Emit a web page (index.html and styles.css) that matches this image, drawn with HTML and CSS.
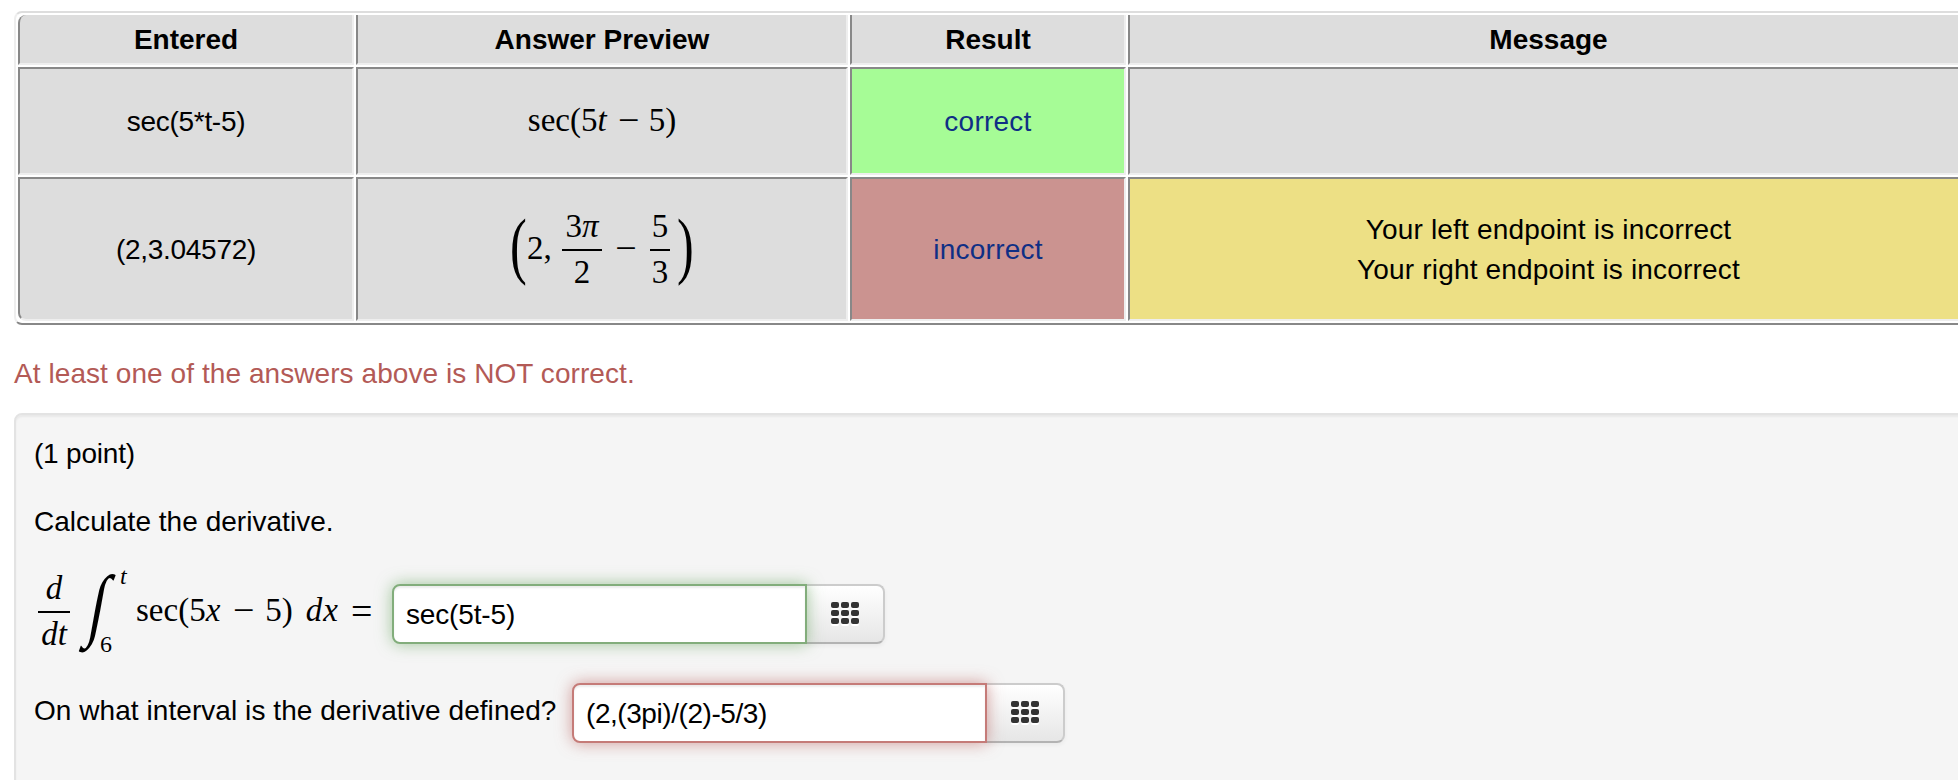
FILE: index.html
```html
<!DOCTYPE html>
<html lang="en">
<head>
    <meta charset="UTF-8">
    <meta name="viewport" content="width=device-width, initial-scale=1.0">
    <title>Calculate the derivative</title>
    <link rel="stylesheet" href="styles.css">
</head>
<body>
    <table class="attempts">
        <colgroup>
            <col class="col-entered">
            <col class="col-preview">
            <col class="col-result">
            <col class="col-message">
        </colgroup>
        <thead>
            <tr>
                <th>Entered</th>
                <th>Answer Preview</th>
                <th>Result</th>
                <th>Message</th>
            </tr>
        </thead>
        <tbody>
            <tr class="row-first">
                <td class="entered">sec(5*t-5)</td>
                <td>
                    <span class="math"><span class="run">sec(5<i>t</i></span><span class="op">−</span><span class="run">5)</span></span>
                </td>
                <td class="correct"><a>correct</a></td>
                <td></td>
            </tr>
            <tr class="row-second">
                <td class="entered">(2,3.04572)</td>
                <td>
                    <span class="math">
                        <span class="paren"><span>(</span></span>
                        <span class="run two">2,</span>
                        <span class="frac wide"><span>3<i>π</i></span><span>2</span></span>
                        <span class="op op-wide">−</span>
                        <span class="frac narrow"><span>5</span><span>3</span></span>
                        <span class="paren"><span>)</span></span>
                    </span>
                </td>
                <td class="incorrect"><a>incorrect</a></td>
                <td class="message">Your left endpoint is incorrect<br>Your right endpoint is incorrect</td>
            </tr>
        </tbody>
    </table>

    <p class="score-message">At least one of the answers above is NOT correct.</p>

    <div class="problem">
        <p class="points">(1 point)</p>
        <p class="prompt">Calculate the derivative.</p>
        <div class="question first">
            <span class="math formula">
                <span class="frac ddt"><span><i>d</i></span><span><i>dt</i></span></span>
                <span class="integral"><span>∫</span></span>
                <span class="limits"><i>t</i><span>6</span></span>
                <span class="run">sec(5<i>x</i></span><span class="op">−</span><span class="run">5)</span>
                <i class="run dx">dx</i>
                <span class="eq">=</span>
            </span>
            <div class="answer">
                <input class="is-correct" type="text" value="sec(5t-5)">
                <button type="button">
                    <svg width="28" height="24" viewBox="0 0 28 24">
                        <g class="icon-shadow">
                            <rect x="0" y="2" width="8" height="6" rx="2"/><rect x="10" y="2" width="8" height="6" rx="2"/><rect x="20" y="2" width="8" height="6" rx="2"/>
                            <rect x="0" y="10" width="8" height="6" rx="2"/><rect x="10" y="10" width="8" height="6" rx="2"/><rect x="20" y="10" width="8" height="6" rx="2"/>
                            <rect x="0" y="18" width="8" height="6" rx="2"/><rect x="10" y="18" width="8" height="6" rx="2"/><rect x="20" y="18" width="8" height="6" rx="2"/>
                        </g>
                        <g class="icon-keys">
                            <rect x="0" y="0" width="8" height="6" rx="2"/><rect x="10" y="0" width="8" height="6" rx="2"/><rect x="20" y="0" width="8" height="6" rx="2"/>
                            <rect x="0" y="8" width="8" height="6" rx="2"/><rect x="10" y="8" width="8" height="6" rx="2"/><rect x="20" y="8" width="8" height="6" rx="2"/>
                            <rect x="0" y="16" width="8" height="6" rx="2"/><rect x="10" y="16" width="8" height="6" rx="2"/><rect x="20" y="16" width="8" height="6" rx="2"/>
                        </g>
                    </svg>
                </button>
            </div>
        </div>
        <div class="question second">
            <span class="label">On what interval is the derivative defined?</span>
            <div class="answer">
                <input class="is-incorrect" type="text" value="(2,(3pi)/(2)-5/3)">
                <button type="button">
                    <svg width="28" height="24" viewBox="0 0 28 24">
                        <g class="icon-shadow">
                            <rect x="0" y="2" width="8" height="6" rx="2"/><rect x="10" y="2" width="8" height="6" rx="2"/><rect x="20" y="2" width="8" height="6" rx="2"/>
                            <rect x="0" y="10" width="8" height="6" rx="2"/><rect x="10" y="10" width="8" height="6" rx="2"/><rect x="20" y="10" width="8" height="6" rx="2"/>
                            <rect x="0" y="18" width="8" height="6" rx="2"/><rect x="10" y="18" width="8" height="6" rx="2"/><rect x="20" y="18" width="8" height="6" rx="2"/>
                        </g>
                        <g class="icon-keys">
                            <rect x="0" y="0" width="8" height="6" rx="2"/><rect x="10" y="0" width="8" height="6" rx="2"/><rect x="20" y="0" width="8" height="6" rx="2"/>
                            <rect x="0" y="8" width="8" height="6" rx="2"/><rect x="10" y="8" width="8" height="6" rx="2"/><rect x="20" y="8" width="8" height="6" rx="2"/>
                            <rect x="0" y="16" width="8" height="6" rx="2"/><rect x="10" y="16" width="8" height="6" rx="2"/><rect x="20" y="16" width="8" height="6" rx="2"/>
                        </g>
                    </svg>
                </button>
            </div>
        </div>
    </div>
</body>
</html>
```
FILE: styles.css
```css
* {
    box-sizing: border-box;
}

body {
    margin: 0;
    padding: 11px 0 0 14px;
    height: 780px;
    overflow: hidden;
    background: #fff;
    color: #000;
    font-family: "Liberation Sans", Arial, sans-serif;
    font-size: 28px;
    line-height: 40px;
}

p {
    margin: 0;
}

/* Results table */
.attempts {
    width: 1959px;
    table-layout: fixed;
    border-collapse: separate;
    border-spacing: 2px;
    border: 2px solid;
    border-color: #ddd #888 #888 #eee;
    border-radius: 8px;
    text-align: center;
}

.col-entered {
    width: 336px;
}

.col-preview {
    width: 492px;
}

.col-result {
    width: 276px;
}

.attempts th,
.attempts td {
    padding: 2px 0 0;
    vertical-align: middle;
    background: #ddd;
    border: 2px solid;
    border-color: #888 #eee #eee #888;
}

.attempts th {
    height: 50px;
    border-top: 0;
}

.attempts th:first-child {
    border-top-left-radius: 8px;
}

.row-first td {
    height: 108px;
}

.row-second td {
    height: 144px;
}

.row-second td:first-child {
    border-bottom-left-radius: 8px;
}

.attempts .entered {
    letter-spacing: -0.3px;
}

.attempts .correct {
    background: #a6fc96;
}

.attempts .incorrect {
    background: #cb9390;
}

.attempts .message {
    background: #ede085;
    letter-spacing: 0.18px;
}

.attempts a {
    color: #0f2f85;
    letter-spacing: 0.25px;
}

/* Formulas */
.math {
    display: inline-flex;
    align-items: center;
    vertical-align: middle;
    font-family: "Liberation Serif", "Times New Roman", serif;
    font-size: 33px;
    line-height: 40px;
}

.run {
    padding-bottom: 4px;
}

.run i {
    letter-spacing: 2px;
}

.op {
    width: 40px;
    padding-bottom: 4px;
    font-size: 38px;
    text-align: center;
}

.op-wide {
    width: 48px;
}

.frac {
    display: flex;
    flex-direction: column;
    line-height: 42px;
    text-align: center;
}

.frac > span {
    height: 44px;
}

.frac > span:first-child {
    height: 46px;
    border-bottom: 2px solid #000;
}

.two {
    width: 35px;
    text-align: left;
}

.wide {
    width: 40px;
}

.narrow {
    width: 20px;
    margin-right: 7px;
}

.paren {
    width: 17px;
    height: 80px;
    font-size: 74px;
    line-height: 70px;
    text-align: left;
}

.paren span {
    display: inline-block;
    transform: scaleX(0.68);
    transform-origin: left;
}

/* Message under the table */
.score-message {
    margin-top: 29px;
    color: #b35a56;
    letter-spacing: 0.07px;
}

/* Problem body */
.problem {
    width: 1959px;
    height: 400px;
    margin-top: 19px;
    padding: 19px 18px;
    background: #f5f5f5;
    border: 2px solid #e3e3e3;
    border-radius: 8px;
    box-shadow: inset 0 2px 2px rgba(0, 0, 0, 0.05);
}

.points {
    letter-spacing: -0.2px;
}

.prompt {
    margin-top: 28px;
    letter-spacing: 0.03px;
}

.question {
    display: flex;
    align-items: center;
}

.first {
    height: 100px;
    margin-top: 20px;
}

.first .answer {
    margin-top: 4px;
}

.second {
    margin-top: 21px;
}

.formula {
    width: 358px;
}

.formula .op {
    width: 43px;
}

.ddt {
    width: 32px;
    margin-left: 4px;
}

.integral {
    width: 12px;
    margin-left: 18px;
    padding-bottom: 16px;
    font-size: 80px;
    line-height: 80px;
}

.integral span {
    display: inline-block;
    transform: scaleX(0.75) skewX(-14deg);
}

.limits {
    display: flex;
    flex-direction: column;
    justify-content: space-between;
    width: 36px;
    height: 88px;
    font-size: 24px;
    line-height: 24px;
}

.limits i {
    padding-left: 20px;
    line-height: 16px;
}

.dx {
    margin-left: 13px;
    letter-spacing: 1px;
}

.eq {
    margin-left: 12px;
    padding-bottom: 3px;
    font-size: 38px;
}

.label {
    width: 538px;
    padding-bottom: 5px;
    letter-spacing: 0.06px;
}

.answer {
    display: flex;
}

.answer input {
    width: 415px;
    height: 60px;
    padding: 2px 12px 0;
    background: #fff;
    border: 2px solid;
    border-radius: 8px 0 0 8px;
    font: inherit;
    color: #000;
    z-index: 1;
}

.answer .is-correct {
    border-color: #82ad7b;
    box-shadow: inset 0 2px 2px rgba(0, 0, 0, 0.075), 0 0 16px rgba(101, 163, 91, 0.6);
    letter-spacing: -0.15px;
}

.answer .is-incorrect {
    border-color: #c57b78;
    box-shadow: inset 0 2px 2px rgba(0, 0, 0, 0.075), 0 0 16px rgba(184, 91, 88, 0.6);
    letter-spacing: -0.44px;
}

.answer button {
    display: flex;
    align-items: center;
    justify-content: center;
    width: 80px;
    height: 60px;
    margin-left: -2px;
    padding: 0;
    background: linear-gradient(#fff, #e6e6e6);
    border: 2px solid #ccc;
    border-bottom-color: #b3b3b3;
    border-radius: 0 8px 8px 0;
    box-shadow: 0 2px 4px rgba(0, 0, 0, 0.05);
}

.icon-shadow {
    fill: #fff;
}

.icon-keys {
    fill: #333;
}
```
